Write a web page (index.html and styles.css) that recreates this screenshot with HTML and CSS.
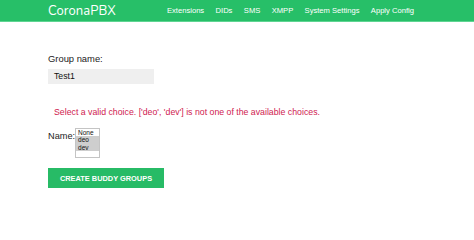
FILE: index.html
```html
<!DOCTYPE html>
<html>
<head>
<meta charset="utf-8">
<link rel="stylesheet" href="styles.css">
</head>
<body>
<nav class="navbar">
  <div class="brand">CoronaPBX</div>
  <ul class="links">
    <li>Extensions</li>
    <li>DIDs</li>
    <li>SMS</li>
    <li>XMPP</li>
    <li>System Settings</li>
    <li>Apply Config</li>
  </ul>
</nav>
<main class="content">
  <label class="label">Group name:</label>
  <div class="input">Test1</div>
  <p class="error">Select a valid choice. ['deo', 'dev'] is not one of the available choices.</p>
  <div class="row">
    <span class="label">Name:</span>
    <div class="select">
      <div class="opt">None</div>
      <div class="opt sel">deo</div>
      <div class="opt sel">dev</div>
    </div>
  </div>
  <button class="btn">CREATE BUDDY GROUPS</button>
</main>
</body>
</html>
```
FILE: styles.css
```css
* { box-sizing: border-box; }
html, body { margin: 0; padding: 0; background: #fff; }
body { font-family: "Liberation Sans", Arial, sans-serif; color: #222; }
.navbar {
  height: 22px;
  background: #27bf68;
  border-bottom: 1px solid #5fd592;
  display: flex;
  align-items: center;
  padding-left: 48px;
}
.brand {
  font-family: "Nunito", "Noto Sans", sans-serif;
  color: #fff;
  font-size: 13px;
  width: 119px;
  letter-spacing: 0.1px;
}
.links {
  display: flex;
  list-style: none;
  margin: 0;
  padding: 0;
  gap: 11.4px;
}
.links li { color: #fff; font-size: 7.6px; }
.content { padding: 31px 48px 0; display: flex; flex-direction: column; align-items: flex-start; }
.label { font-size: 9.4px; color: #222; }
.input {
  margin-top: 5px;
  width: 106px;
  height: 15px;
  background: #efefef;
  font-size: 8.7px;
  line-height: 15px;
  padding-left: 6px;
  color: #111;
}
.error {
  margin: 23px 0 0 6px;
  color: #cf2150;
  font-size: 8.75px;
}
.row { display: flex; align-items: flex-start; margin-top: 11px; }
.row .label { font-size: 9.2px; margin-top: 3px; margin-right: 0; }
.select {
  width: 25px;
  height: 30px;
  border: 1px solid #c4c4c4;
  background: #fff;
  font-size: 6.5px;
  padding-top: 0;
}
.opt { line-height: 7.3px; padding-left: 2px; color: #111; }
.opt.sel { background: #cecece; }
.btn {
  margin-top: 10px;
  width: 116px;
  height: 20px;
  border: none;
  background: #27bb66;
  color: #fff;
  font-family: "Liberation Sans", Arial, sans-serif;
  font-weight: bold;
  font-size: 7.4px;
  padding: 0;
}
```
